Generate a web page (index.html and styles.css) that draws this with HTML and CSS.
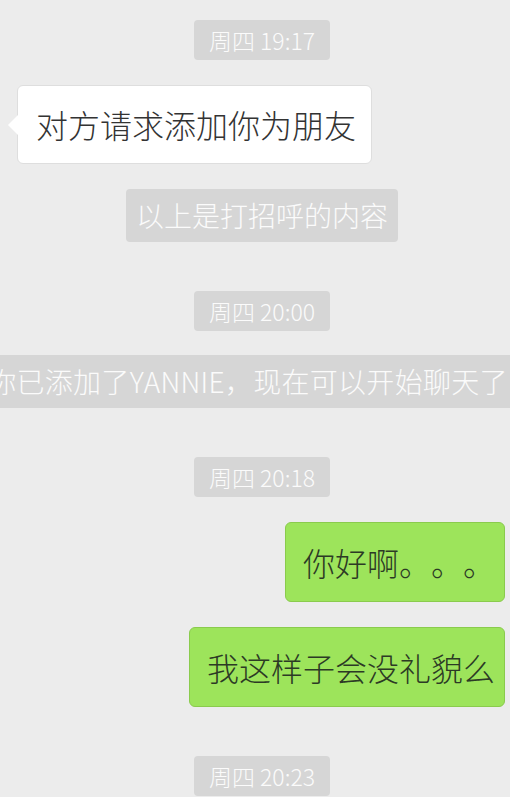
FILE: index.html
```html
<!DOCTYPE html>
<html lang="zh-CN">
<head>
    <meta charset="UTF-8">
    <meta name="viewport" content="width=device-width, initial-scale=1.0">
    <title>聊天</title>
    <link rel="stylesheet" href="styles.css">
</head>
<body>
    <div class="chat">
        <!-- 时间 -->
        <div class="row center first">
            <span class="stamp">周四 19:17</span>
        </div>

        <!-- 对方消息 -->
        <div class="row left">
            <div class="bubble white">对方请求添加你为朋友</div>
        </div>

        <div class="row center near">
            <span class="notice">以上是打招呼的内容</span>
        </div>

        <div class="row center far">
            <span class="stamp">周四 20:00</span>
        </div>

        <div class="row wide near">
            <span class="notice">你已添加了YANNIE，现在可以开始聊天了</span>
        </div>

        <div class="row center far">
            <span class="stamp">周四 20:18</span>
        </div>

        <!-- 我的消息 -->
        <div class="row right near">
            <div class="bubble green">你好啊。。。</div>
        </div>

        <div class="row right near">
            <div class="bubble green">我这样子会没礼貌么</div>
        </div>

        <div class="row center far">
            <span class="stamp">周四 20:23</span>
        </div>
    </div>
</body>
</html>
```

FILE: styles.css
```css
body {
    margin: 0;
    background-color: #ececec;
    font-family: "Noto Sans CJK SC", "Noto Sans", sans-serif;
    font-weight: 300;
    text-spacing-trim: space-all;
    overflow: hidden;
}
.chat {
    display: flex;
    flex-direction: column;
    padding-top: 20px;
}
.row {
    display: flex;
}
.near {
    margin-top: 25px;
}
.far {
    margin-top: 49px;
}
.left {
    margin-top: 25px;
    padding-left: 17px;
}
.right {
    justify-content: flex-end;
    padding-right: 5px;
}
.center {
    justify-content: center;
    padding-left: 14px;
}
.wide {
    justify-content: center;
    margin-top: 24px;
}
.stamp {
    background-color: #d6d6d6;
    color: #fbfbfb;
    font-size: 23px;
    line-height: 30px;
    padding: 5px 15px;
    border-radius: 4px;
    white-space: nowrap;
}
.notice {
    background-color: #d6d6d6;
    color: #fbfbfb;
    font-size: 28px;
    line-height: 41px;
    padding: 6px 10px;
    border-radius: 4px;
    white-space: nowrap;
}
.wide .notice {
    letter-spacing: 0.3px;
    padding: 6px 20px 6px 6px;
}
.bubble {
    position: relative;
    font-size: 32px;
    line-height: 46px;
    color: #333;
    border-radius: 6px;
    padding: 16px 17px;
}
.white {
    background: #fff;
    border: 1px solid #dedede;
    line-height: 45px;
    padding: 16px 15px 16px 18px;
}
.white::before {
    content: "";
    position: absolute;
    left: -10px;
    top: 29px;
    border-top: 10px solid transparent;
    border-bottom: 10px solid transparent;
    border-right: 10px solid #fff;
}
.green {
    background: #9de45b;
    border: 1px solid #8acb4d;
    color: #2c3a25;
    padding: 16px 9px 16px 17px;
}
```
